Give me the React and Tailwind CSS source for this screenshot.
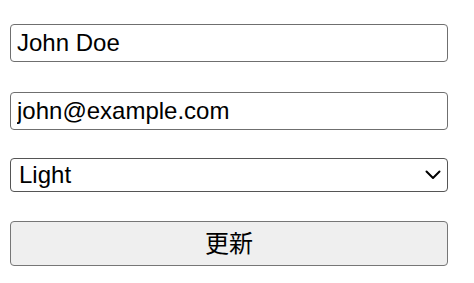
import React from "react";

const fontCls = "font-['Liberation_Sans',Arial,'Noto_Sans_CJK_JP',sans-serif]";

export default function App() {
  return (
    <div className={`w-[474px] h-[283px] bg-white pt-[24px] pl-[10px] ${fontCls}`}>
      <div className="flex flex-col w-[438px]">
        <input
          type="text"
          defaultValue="John Doe"
          className={`h-[38px] w-full border-[1.5px] border-[#6f6f6f] rounded-[4px] px-[6px] text-[24px] text-black bg-white outline-none ${fontCls}`}
        />
        <input
          type="email"
          defaultValue="john@example.com"
          className={`mt-[30px] h-[38px] w-full border-[1.5px] border-[#6f6f6f] rounded-[4px] px-[6px] text-[24px] text-black bg-white outline-none ${fontCls}`}
        />
        <div className="relative mt-[28px]">
          <select
            defaultValue="light"
            className={`appearance-none h-[34px] w-full border-[1.5px] border-[#555555] rounded-[4px] pl-[8px] text-[24px] leading-[30px] text-black bg-white outline-none ${fontCls}`}
          >
            <option value="light">Light</option>
            <option value="dark">Dark</option>
          </select>
          <svg
            className="absolute right-[7px] top-[12px] pointer-events-none"
            width="16"
            height="10"
            viewBox="0 0 16 10"
            fill="none"
          >
            <path d="M1.5 1.5 L8 8 L14.5 1.5" stroke="#000" strokeWidth="2" strokeLinecap="round" strokeLinejoin="round" />
          </svg>
        </div>
        <button
          type="button"
          className={`mt-[29px] h-[45px] w-full border-[1.5px] border-[#767676] rounded-[4px] bg-[#efefef] text-[24px] text-black ${fontCls}`}
        >
          更新
        </button>
      </div>
    </div>
  );
}
